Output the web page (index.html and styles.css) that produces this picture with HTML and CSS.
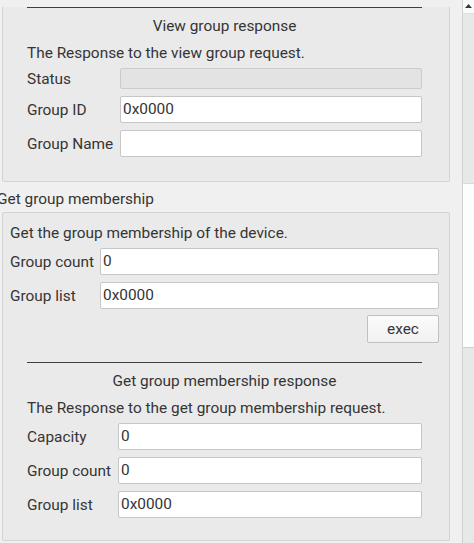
FILE: index.html
```html
<!DOCTYPE html>
<html>
<head>
<meta charset="utf-8">
<link rel="stylesheet" href="styles.css">
</head>
<body>
<div class="window">
  <div class="content">
    <div class="box box-top">
      <div class="resp">
        <div class="sep"></div>
        <div class="title">View group response</div>
        <div class="desc">The Response to the view group request.</div>
        <div class="form form-a">
          <div class="row row-short"><span class="label">Status</span><div class="field field-disabled"></div></div>
          <div class="row"><span class="label">Group ID</span><div class="field">0x0000</div></div>
          <div class="row"><span class="label">Group Name</span><div class="field"></div></div>
        </div>
      </div>
    </div>

    <div class="group-title">Get group membership</div>
    <div class="box box-group">
      <div class="desc desc-first">Get the group membership of the device.</div>
      <div class="form form-b">
        <div class="row"><span class="label">Group count</span><div class="field">0</div></div>
        <div class="row row-list"><span class="label">Group list</span><div class="field">0x0000</div></div>
      </div>
      <div class="actions"><button class="btn">exec</button></div>
      <div class="resp">
        <div class="sep sep-lower"></div>
        <div class="title">Get group membership response</div>
        <div class="desc">The Response to the get group membership request.</div>
        <div class="form form-c">
          <div class="row"><span class="label">Capacity</span><div class="field">0</div></div>
          <div class="row"><span class="label">Group count</span><div class="field">0</div></div>
          <div class="row"><span class="label">Group list</span><div class="field">0x0000</div></div>
        </div>
      </div>
    </div>
  </div>
  <div class="scrollbar">
    <div class="sb-up"><svg width="7" height="4" viewBox="0 0 7 4"><path d="M0 4 L3.5 0 L7 4 Z" fill="#3a3a3a"/></svg></div>
    <div class="sb-track">
      <div class="sb-handle"></div>
    </div>
  </div>
</div>
</body>
</html>
```

FILE: styles.css
```css
html, body {
  margin: 0;
  padding: 0;
  height: 100%;
  overflow: hidden;
  background: #f0f0f0;
}

body {
  font-family: Roboto, "Liberation Sans", sans-serif;
  font-size: 15.4px;
  color: #353535;
}

.window {
  display: flex;
  height: 543px;
  width: 474px;
}

.content {
  width: 460px;
  padding-left: 2px;
  flex: none;
  overflow: hidden;
}

.box {
  width: 448px;
  background: #eaeaea;
  border: 1px solid #d3d3d3;
  border-radius: 2px;
  padding: 0 10px 0 7px;
  box-sizing: border-box;
}

.box-top {
  border-top: none;
  border-radius: 0 0 2px 2px;
  padding-bottom: 24px;
}

.box-group {
  margin-top: 3px;
  padding-top: 10px;
  padding-bottom: 22px;
  border-bottom: 1px solid #d3d3d3;
}

.resp {
  margin: 0 17px;
}

.sep {
  margin-top: 7px;
  border-top: 1px solid #3e3e3e;
}

.sep-lower {
  margin-top: 19px;
}

.title {
  margin-top: 8px;
  line-height: 20px;
  text-align: center;
}

.desc {
  margin-top: 7px;
  line-height: 20px;
  white-space: nowrap;
}

.desc-first {
  margin-top: 0;
}

.group-title {
  margin-top: 7px;
  margin-left: -5px;
  line-height: 20px;
  white-space: nowrap;
}

.form {
  display: grid;
  row-gap: 7px;
  margin-top: 5px;
}

.form-a { grid-template-columns: 93px 1fr; }
.form-b { grid-template-columns: 90px 1fr; }
.form-c { grid-template-columns: 91px 1fr; }

.form-b .row-list { margin-top: 1px; }

.row {
  display: contents;
}

.label {
  align-self: center;
  white-space: nowrap;
  line-height: 20px;
}

.field {
  height: 27px;
  box-sizing: border-box;
  background: #ffffff;
  border: 1px solid #c6c6c6;
  border-radius: 2px;
  padding-left: 2px;
  line-height: 25px;
  white-space: nowrap;
}

.row-short .field {
  height: 21px;
}

.field-disabled {
  background: #e3e3e3;
  border-color: #cbcbcb;
}

.actions {
  display: flex;
  justify-content: flex-end;
  margin-top: 6px;
}

.btn {
  width: 72px;
  height: 28px;
  box-sizing: border-box;
  border: 1px solid #c0c0c0;
  border-radius: 2px;
  background: linear-gradient(#fbfbfb, #f1f1f1);
  font-family: Roboto, "Liberation Sans", sans-serif;
  font-size: 15.4px;
  color: #353535;
  padding: 0;
}

.scrollbar {
  width: 12px;
  flex: none;
  border-left: 1px solid #d2d2d2;
  box-sizing: border-box;
  display: flex;
  flex-direction: column;
}

.sb-up {
  height: 14px;
  background: #fafafa;
  border-bottom: 1px solid #dedede;
  box-sizing: border-box;
  display: flex;
  justify-content: center;
  padding-top: 4px;
}

.sb-track {
  flex: 1;
  background: #e8e8e8;
}

.sb-handle {
  margin-top: 169px;
  height: 165px;
  background: #fdfdfd;
  border-top: 1px solid #dadada;
  border-bottom: 1px solid #cfcfcf;
  box-sizing: border-box;
}
```
